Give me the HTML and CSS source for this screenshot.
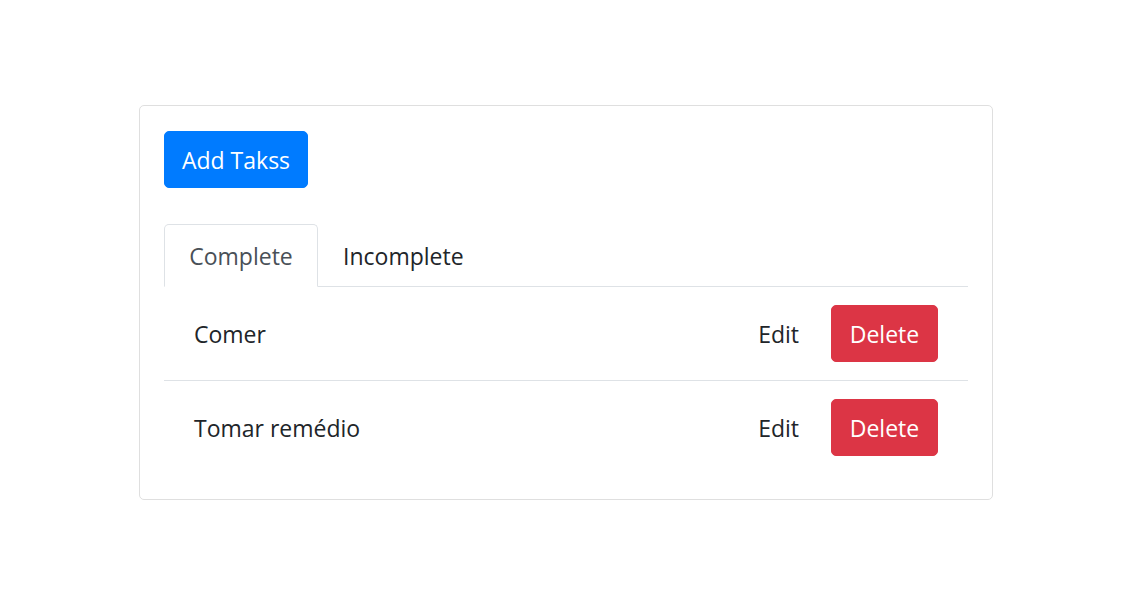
FILE: index.html
```html
<!DOCTYPE html>
<html lang="pt">
<head>
<meta charset="utf-8">
<title>Tasks</title>
<link rel="stylesheet" href="styles.css">
</head>
<body>
<div class="card">
  <div class="card-body">
    <button class="btn btn-primary">Add Takss</button>
    <ul class="tabs">
      <li class="tab active">Complete</li>
      <li class="tab">Incomplete</li>
    </ul>
    <div class="list">
      <div class="row">
        <span class="title">Comer</span>
        <div class="actions">
          <span class="edit">Edit</span>
          <button class="btn btn-danger">Delete</button>
        </div>
      </div>
      <div class="row">
        <span class="title">Tomar remédio</span>
        <div class="actions">
          <span class="edit">Edit</span>
          <button class="btn btn-danger">Delete</button>
        </div>
      </div>
    </div>
  </div>
</div>
</body>
</html>
```

FILE: styles.css
```css
html, body {
  margin: 0;
  padding: 0;
  background: #ffffff;
}
body {
  font-family: "Open Sans", "Noto Sans", sans-serif;
  font-size: 23px;
  color: #212529;
}
.card {
  box-sizing: border-box;
  width: 854px;
  height: 395px;
  margin: 105px 0 0 139px;
  border: 1px solid #dfdfdf;
  border-radius: 5px;
}
.card-body {
  padding: 25px 24px 24px 24px;
  display: flex;
  flex-direction: column;
}
.btn {
  font-family: inherit;
  font-size: 23px;
  line-height: 35px;
  white-space: nowrap;
  border: 1px solid transparent;
  border-radius: 5px;
  color: #ffffff;
  cursor: pointer;
  box-sizing: border-box;
  height: 57px;
  padding: 2px 0 0 0;
  display: flex;
  align-items: center;
  justify-content: center;
}
.btn-primary {
  align-self: flex-start;
  background: #007bff;
  border-color: #007bff;
  width: 144px;
}
.btn-danger {
  background: #dc3545;
  border-color: #dc3545;
  width: 107px;
}
.tabs {
  list-style: none;
  margin: 36px 0 0 0;
  padding: 0;
  display: flex;
  border-bottom: 1px solid #dee2e6;
}
.tab {
  box-sizing: border-box;
  height: 63px;
  margin-bottom: -1px;
  padding: 0 24px;
  display: flex;
  align-items: center;
  border: 1px solid transparent;
  border-top-left-radius: 5px;
  border-top-right-radius: 5px;
  color: #212529;
}
.tab.active {
  color: #495057;
  border-color: #dee2e6 #dee2e6 #ffffff;
  background: #ffffff;
  width: 154px;
  justify-content: center;
}
.row {
  box-sizing: border-box;
  height: 94px;
  padding: 0 30px;
  display: flex;
  align-items: center;
  justify-content: space-between;
}
.row + .row {
  border-top: 1px solid #dee2e6;
}
.row:first-child {
  height: 93px;
}
.actions {
  display: flex;
  align-items: center;
}
.edit {
  margin-right: 32px;
  color: #212529;
}
```
